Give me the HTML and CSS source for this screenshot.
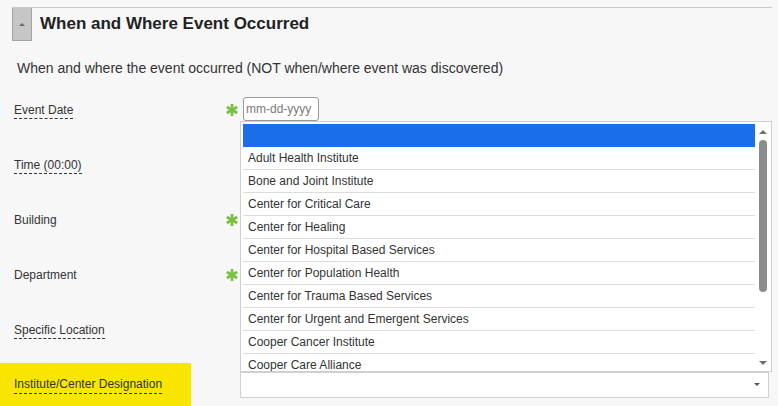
FILE: index.html
```html
<!DOCTYPE html>
<html>
<head>
<meta charset="utf-8">
<link rel="stylesheet" href="styles.css">
</head>
<body>
<div class="page">
  <section class="panel">
    <div class="panel-head">
      <button class="toggle" type="button"><span class="tri-up"></span></button>
      <h2 class="title">When and Where Event Occurred</h2>
    </div>
    <p class="desc">When and where the event occurred (NOT when/where event was discovered)</p>
    <div class="rows">
      <div class="row">
        <div class="label"><span class="dashed">Event Date</span></div>
        <div class="req"><svg class="star" viewBox="0 0 12 12"><g stroke="#79c142" stroke-width="2.8"><line x1="6" y1="0" x2="6" y2="12"/><line x1="0.8" y1="3" x2="11.2" y2="9"/><line x1="0.8" y1="9" x2="11.2" y2="3"/></g></svg></div>
        <div class="field field-date"><input class="date" type="text" placeholder="mm-dd-yyyy"></div>
      </div>
      <div class="row">
        <div class="label"><span class="dashed">Time (00:00)</span></div>
        <div class="req"></div>
        <div class="field"></div>
      </div>
      <div class="row">
        <div class="label"><span>Building</span></div>
        <div class="req"><svg class="star" viewBox="0 0 12 12"><g stroke="#79c142" stroke-width="2.8"><line x1="6" y1="0" x2="6" y2="12"/><line x1="0.8" y1="3" x2="11.2" y2="9"/><line x1="0.8" y1="9" x2="11.2" y2="3"/></g></svg></div>
        <div class="field"></div>
      </div>
      <div class="row">
        <div class="label"><span>Department</span></div>
        <div class="req"><svg class="star" viewBox="0 0 12 12"><g stroke="#79c142" stroke-width="2.8"><line x1="6" y1="0" x2="6" y2="12"/><line x1="0.8" y1="3" x2="11.2" y2="9"/><line x1="0.8" y1="9" x2="11.2" y2="3"/></g></svg></div>
        <div class="field"></div>
      </div>
      <div class="row">
        <div class="label"><span class="dashed">Specific Location</span></div>
        <div class="req"></div>
        <div class="field"></div>
      </div>
      <div class="row">
        <div class="label label-hl"><span class="dashed">Institute/Center Designation</span></div>
        <div class="req"></div>
        <div class="field"><div class="select"><span class="caret"></span></div></div>
      </div>
    </div>
  </section>

  <div class="dropdown">
    <ul class="options">
      <li class="opt selected"></li>
      <li class="opt">Adult Health Institute</li>
      <li class="opt">Bone and Joint Institute</li>
      <li class="opt">Center for Critical Care</li>
      <li class="opt">Center for Healing</li>
      <li class="opt">Center for Hospital Based Services</li>
      <li class="opt">Center for Population Health</li>
      <li class="opt">Center for Trauma Based Services</li>
      <li class="opt">Center for Urgent and Emergent Services</li>
      <li class="opt">Cooper Cancer Institute</li>
      <li class="opt">Cooper Care Alliance</li>
    </ul>
    <div class="scrollbar">
      <span class="sb-up"></span>
      <span class="sb-thumb"></span>
      <span class="sb-down"></span>
    </div>
  </div>
</div>
</body>
</html>
```

FILE: styles.css
```css
html, body {
  margin: 0;
  padding: 0;
  background: #f7f7f7;
}
body {
  font-family: "Liberation Sans", Arial, sans-serif;
  color: #333;
  width: 778px;
  height: 406px;
  overflow: hidden;
}
.page {
  position: relative;
  width: 778px;
  height: 406px;
}
.panel {
  padding-top: 7px;
}
.panel-head {
  display: flex;
  align-items: flex-start;
  margin-left: 12px;
  width: 760px;
  border-top: 1px solid #c9c9c9;
}
.toggle {
  width: 20px;
  height: 33px;
  margin: 0;
  padding: 0;
  background: #c6c6c6;
  border: 1px solid #a3a3a3;
  border-top: none;
  display: flex;
  align-items: center;
  justify-content: center;
}
.tri-up {
  width: 0;
  height: 0;
  border-left: 3px solid transparent;
  border-right: 3px solid transparent;
  border-bottom: 3px solid #6a6a6a;
}
.title {
  margin: 6px 0 0 8px;
  font-size: 17px;
  font-weight: bold;
  color: #222;
  line-height: 20px;
}
.desc {
  margin: 18px 0 0 17px;
  font-size: 14px;
  line-height: 18px;
  color: #333;
}
.rows {
  margin-top: 5px;
  display: flex;
  flex-direction: column;
}
.row {
  display: flex;
  align-items: center;
  height: 55px;
}
.label {
  width: 191px;
  box-sizing: border-box;
  padding-left: 14px;
  font-size: 12px;
  line-height: 16px;
  color: #333;
}
.label-hl {
  background: #f8e600;
  height: 43px;
  display: flex;
  align-items: center;
}
.dashed {
  border-bottom: 1px dashed #333;
  padding-bottom: 1px;
}
.req {
  width: 49px;
  display: flex;
  justify-content: flex-end;
  padding-right: 2px;
  box-sizing: border-box;
}
.star {
  width: 12px;
  height: 12px;
  display: block;
}
.field {
  flex: 1;
  display: flex;
  align-items: center;
}
.field-date {
  padding-left: 3px;
}
.date {
  width: 76px;
  height: 24px;
  box-sizing: border-box;
  border: 1px solid #9a9a9a;
  border-radius: 3px;
  padding: 0 2px;
  font-family: "Liberation Sans", Arial, sans-serif;
  font-size: 12px;
  background: #fff;
  margin-top: -1px;
}
.date::placeholder {
  color: #7a7a7a;
}
.select {
  width: 529px;
  height: 26px;
  box-sizing: border-box;
  background: #fff;
  border: 1px solid #d0d0d0;
  display: flex;
  align-items: center;
  justify-content: flex-end;
  padding-right: 8px;
}
.caret {
  width: 0;
  height: 0;
  border-left: 3px solid transparent;
  border-right: 3px solid transparent;
  border-top: 3px solid #555;
}
.dropdown {
  position: absolute;
  left: 240px;
  top: 121px;
  width: 532px;
  height: 251px;
  box-sizing: border-box;
  background: #fff;
  border: 1px solid #cfcfcf;
  padding: 2px 1px 0 2px;
  display: flex;
  overflow: hidden;
}
.options {
  list-style: none;
  margin: 0;
  padding: 0;
  flex: 1;
}
.opt {
  height: 22px;
  line-height: 22px;
  border-bottom: 1px solid #dcdcdc;
  padding-left: 5px;
  font-size: 12px;
  color: #333;
  white-space: nowrap;
}
.selected {
  background: #1a6fe9;
  border-bottom-color: #1a6fe9;
}
.scrollbar {
  width: 14px;
  position: relative;
  margin-left: 1px;
}
.sb-up {
  position: absolute;
  left: 3px;
  top: 6px;
  width: 0;
  height: 0;
  border-left: 4px solid transparent;
  border-right: 4px solid transparent;
  border-bottom: 4px solid #6e6e6e;
}
.sb-thumb {
  position: absolute;
  left: 3px;
  top: 16px;
  width: 8px;
  height: 152px;
  background: #8c8c8c;
  border-radius: 4px;
}
.sb-down {
  position: absolute;
  left: 3px;
  top: 237px;
  width: 0;
  height: 0;
  border-left: 4px solid transparent;
  border-right: 4px solid transparent;
  border-top: 4px solid #6e6e6e;
}
```
